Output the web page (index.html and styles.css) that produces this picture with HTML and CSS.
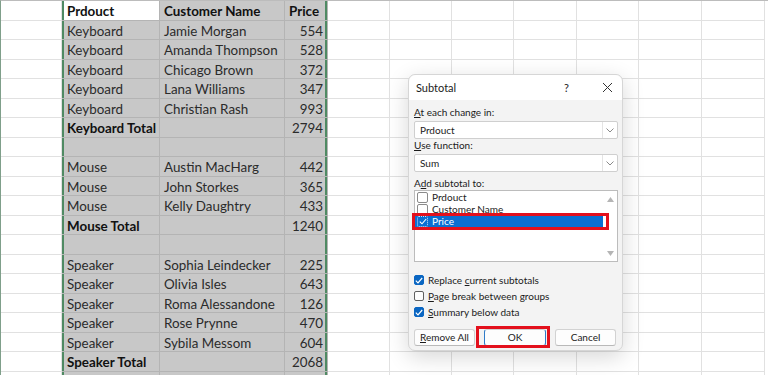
FILE: index.html
```html
<!DOCTYPE html>
<html lang="en">

<head>
    <meta charset="UTF-8">
    <meta name="viewport" content="width=device-width, initial-scale=1.0">
    <title>Subtotal</title>
    <link rel="stylesheet" href="styles.css">
</head>

<body>
    <div class="sheet">
        <div class="grid" id="grid"></div>

        <div class="dialog">
            <div class="dlg-title">
                <span class="dlg-name">Subtotal</span>
                <span class="dlg-help">?</span>
                <span class="dlg-close">
                    <svg width="11" height="11" viewBox="0 0 11 11"><path d="M1 1 L10 10 M10 1 L1 10" stroke="#333" stroke-width="1" fill="none"/></svg>
                </span>
            </div>

            <div class="dlg-body">
                <div class="label first"><u>A</u>t each change in:</div>
                <div class="select">
                    <span class="select-value">Prdouct</span>
                    <span class="select-arrow">
                        <svg width="8" height="5" viewBox="0 0 8 5"><path d="M0.5 0.5 L4 4 L7.5 0.5" stroke="#8a8a8a" fill="none"/></svg>
                    </span>
                </div>

                <div class="label"><u>U</u>se function:</div>
                <div class="select second">
                    <span class="select-value">Sum</span>
                    <span class="select-arrow">
                        <svg width="8" height="5" viewBox="0 0 8 5"><path d="M0.5 0.5 L4 4 L7.5 0.5" stroke="#8a8a8a" fill="none"/></svg>
                    </span>
                </div>

                <div class="label third">A<u>d</u>d subtotal to:</div>
                <div class="listbox">
                    <div class="list-items">
                        <div class="list-item"><span class="box"></span><span>Prdouct</span></div>
                        <div class="list-item"><span class="box"></span><span>Customer Name</span></div>
                        <div class="list-item selected marked">
                            <span class="box checked">
                                <svg width="8" height="7" viewBox="0 0 8 7"><path d="M0.8 3.6 L3 5.8 L7.2 1" stroke="#fff" stroke-width="1.1" fill="none"/></svg>
                            </span><span>Price</span>
                        </div>
                    </div>
                    <div class="list-scroll">
                        <svg width="7" height="5" viewBox="0 0 7 5"><path d="M0 5 L3.5 0 L7 5 Z" fill="#b5b5b5"/></svg>
                        <svg width="7" height="5" viewBox="0 0 7 5"><path d="M0 0 L3.5 5 L7 0 Z" fill="#b5b5b5"/></svg>
                    </div>
                </div>

                <div class="options">
                    <div class="option">
                        <span class="cb on">
                            <svg width="8" height="7" viewBox="0 0 8 7"><path d="M0.8 3.6 L3 5.8 L7.2 1" stroke="#fff" stroke-width="1.2" fill="none"/></svg>
                        </span><span>Replace <u>c</u>urrent subtotals</span>
                    </div>
                    <div class="option">
                        <span class="cb"></span><span><u>P</u>age break between groups</span>
                    </div>
                    <div class="option">
                        <span class="cb on">
                            <svg width="8" height="7" viewBox="0 0 8 7"><path d="M0.8 3.6 L3 5.8 L7.2 1" stroke="#fff" stroke-width="1.2" fill="none"/></svg>
                        </span><span><u>S</u>ummary below data</span>
                    </div>
                </div>

                <div class="buttons">
                    <div class="btn"><u>R</u>emove All</div>
                    <div class="btn default marked">OK</div>
                    <div class="btn">Cancel</div>
                </div>
            </div>
        </div>
    </div>

    <script>
        // Sheet data: product, customer, price, row type
        const rows = [
            ['Prdouct', 'Customer Name', 'Price', 'head'],
            ['Keyboard', 'Jamie Morgan', 554],
            ['Keyboard', 'Amanda Thompson', 528],
            ['Keyboard', 'Chicago Brown', 372],
            ['Keyboard', 'Lana Williams', 347],
            ['Keyboard', 'Christian Rash', 993],
            ['Keyboard Total', '', 2794, 'total'],
            ['', '', ''],
            ['Mouse', 'Austin MacHarg', 442],
            ['Mouse', 'John Storkes', 365],
            ['Mouse', 'Kelly Daughtry', 433],
            ['Mouse Total', '', 1240, 'total'],
            ['', '', ''],
            ['Speaker', 'Sophia Leindecker', 225],
            ['Speaker', 'Olivia Isles', 643],
            ['Speaker', 'Roma Alessandone', 126],
            ['Speaker', 'Rose Prynne', 470],
            ['Speaker', 'Sybila Messom', 604],
            ['Speaker Total', '', 2068, 'total'],
            ['', '', '']
        ];

        const grid = document.getElementById('grid');

        function addCell(text, cls) {
            const cell = document.createElement('div');
            cell.className = 'cell' + (cls ? ' ' + cls : '');
            cell.textContent = text;
            grid.appendChild(cell);
        }

        rows.forEach((row) => {
            const type = row[3] || '';
            addCell('');
            addCell(row[0], 'sel col-a' + (type === 'head' ? ' bold active' : '') + (type === 'total' ? ' bold' : ''));
            addCell(row[1], 'sel col-b' + (type === 'head' ? ' bold' : ''));
            addCell(row[2], 'sel col-c' + (type === 'head' ? ' bold left' : ' num'));
            for (let i = 0; i < 7; i++) {
                addCell('');
            }
        });
    </script>
</body>

</html>
```

FILE: styles.css
```css
body {
    margin: 0;
    width: 768px;
    height: 375px;
    overflow: hidden;
    background: white;
    font-family: Lato, 'Liberation Sans', sans-serif;
}

.sheet {
    position: relative;
    width: 768px;
    height: 375px;
    overflow: hidden;
}

/* spreadsheet grid */

.grid {
    display: grid;
    grid-template-columns: 61px 98px 125px 43px 62px 62px 62px 63px 62px 63px 63px;
    grid-auto-rows: 19.5px;
    border-top: 1px solid #bcbcbc;
    border-left: 1px solid #7f9f8a;
}

.cell {
    box-sizing: border-box;
    border-right: 1px solid #e1e1e1;
    border-bottom: 1px solid #e1e1e1;
    padding: 0 3px 0 4px;
    font-size: 13.4px;
    line-height: 20px;
    color: #2b2b2b;
    white-space: nowrap;
    overflow: hidden;
}

.cell.sel {
    background: #c8c8c8;
    border-color: #b4b4b4;
}

.cell.col-a {
    box-shadow: inset 2px 0 0 #4f8a63;
    padding-left: 5px;
}

.cell.col-c {
    box-shadow: inset -2px 0 0 #4f8a63;
    padding-right: 4px;
}

.cell.active {
    background: white;
}

.cell.bold {
    font-weight: 700;
    color: #111;
}

.cell.num {
    text-align: right;
}

.cell.left {
    text-align: left;
}

/* dialog */

.dialog {
    position: absolute;
    left: 408px;
    top: 74px;
    width: 215px;
    height: 277px;
    box-sizing: border-box;
    background: #f3f3f3;
    border: 1px solid #d6d6d6;
    border-radius: 7px;
    box-shadow: 0 6px 22px rgba(0, 0, 0, 0.16);
    font-size: 10px;
    color: #1b1b1b;
}

.dlg-title {
    display: flex;
    align-items: center;
    height: 25px;
    padding: 0 0 0 7px;
    background: white;
    border-radius: 7px 7px 0 0;
    font-size: 11px;
}

.dlg-name {
    flex: 1;
}

.dlg-help {
    width: 12px;
    margin-right: 26px;
    font-size: 11px;
}

.dlg-close {
    display: flex;
    width: 20px;
}

.dlg-body {
    padding: 6px 4px 0 5px;
}

.label {
    line-height: 12px;
    height: 12px;
    margin-bottom: 3px;
}

.label.third {
    margin-top: 5px;
    margin-bottom: 1px;
}

.select {
    display: flex;
    height: 18px;
    box-sizing: border-box;
    background: white;
    border: 1px solid #cfcfcf;
    border-radius: 2px;
}

.select-value {
    flex: 1;
    line-height: 16px;
    padding-left: 5px;
}

.select-arrow {
    display: flex;
    align-items: center;
    justify-content: center;
    width: 14px;
    border-left: 1px solid #e4e4e4;
}

.listbox {
    display: flex;
    height: 72px;
    box-sizing: border-box;
    background: white;
    border: 1px solid #bcbcbc;
}

.list-items {
    flex: 1;
}

.list-item {
    position: relative;
    display: flex;
    align-items: center;
    height: 12px;
    line-height: 12px;
}

.list-item .box {
    display: flex;
    align-items: center;
    justify-content: center;
    width: 9px;
    height: 9px;
    margin: 0 4px 0 2px;
    border: 1px solid #8a8a8a;
    border-radius: 2px;
    background: white;
}

.list-item.selected {
    background: #0a6fd2;
    color: white;
}

.list-item .box.checked {
    background: transparent;
    border: 1px dotted #cfe2f7;
}

.list-scroll {
    display: flex;
    flex-direction: column;
    justify-content: space-between;
    align-items: center;
    width: 14px;
    padding: 6px 0 5px;
    box-sizing: border-box;
}

.options {
    margin-top: 10px;
}

.option {
    display: flex;
    align-items: center;
    height: 16px;
}

.cb {
    display: flex;
    align-items: center;
    justify-content: center;
    width: 10px;
    height: 10px;
    box-sizing: border-box;
    margin-right: 4px;
    border: 1px solid #5f5f5f;
    border-radius: 2px;
    background: #fdfdfd;
}

.cb.on {
    background: #0a66c2;
    border-color: #0a66c2;
}

.buttons {
    display: flex;
    gap: 9px;
    margin-top: 9px;
}

.btn {
    width: 61px;
    height: 17px;
    box-sizing: border-box;
    border: 1px solid #d2d2d2;
    border-bottom-color: #b9b9b9;
    border-radius: 3px;
    background: #fdfdfd;
    text-align: center;
    line-height: 15px;
}

.btn.default {
    width: 62px;
    border-left-color: #2f7bc8;
    border-right-color: #2f7bc8;
}

/* red highlight boxes drawn over the screenshot */

.marked {
    position: relative;
}

.list-item.marked::after {
    content: '';
    position: absolute;
    left: -3px;
    right: -6px;
    top: -2px;
    bottom: -3px;
    border: 3px solid #e3101c;
}

.btn.marked::after {
    content: '';
    position: absolute;
    left: -9px;
    right: -5px;
    top: -4px;
    bottom: -3px;
    border: 3px solid #e3101c;
}
```
